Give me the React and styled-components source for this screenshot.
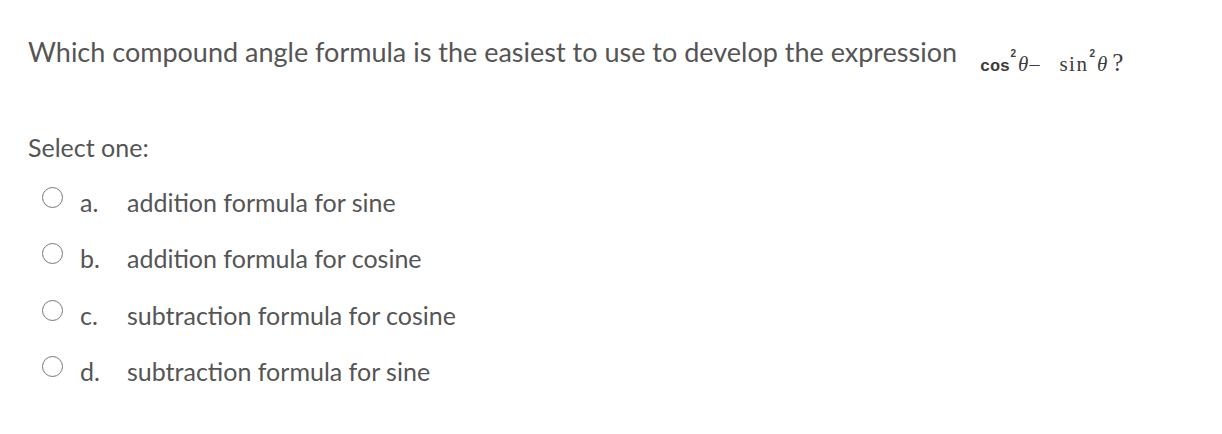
import styled, { createGlobalStyle } from 'styled-components';

const GlobalStyle = createGlobalStyle`
    body {
        margin: 0;
        background: #ffffff;
        font-family: Lato, "Open Sans", sans-serif;
        color: #555555;
    }
`;

const options = [
    {letter: 'a.', text: 'addition formula for sine'},
    {letter: 'b.', text: 'addition formula for cosine'},
    {letter: 'c.', text: 'subtraction formula for cosine'},
    {letter: 'd.', text: 'subtraction formula for sine'},
];

const App = () => {
    return (
        <>
            <GlobalStyle />
            <QuestionWrapper>
                <QuestionText>
                    Which compound angle formula is the easiest to use to develop the expression
                    <MathExpr>
                        <MathMono>cos</MathMono>
                        <Sup>2</Sup>
                        <Theta>θ</Theta>
                        <Minus>–</Minus>
                        <MathSerif>sin</MathSerif>
                        <Sup>2</Sup>
                        <Theta>θ</Theta>
                        <Mark>?</Mark>
                    </MathExpr>
                </QuestionText>
                <Prompt>Select one:</Prompt>
                <OptionList>
                    {options.map((item) => (
                        <OptionRow key={item.letter}>
                            <Radio />
                            <Letter>{item.letter}</Letter>
                            <OptionLabel>{item.text}</OptionLabel>
                        </OptionRow>
                    ))}
                </OptionList>
            </QuestionWrapper>
        </>
    );
};

export default App;

const QuestionWrapper = styled.div`
    padding: 36px 0 0 28px;
    display: flex;
    flex-direction: column;
`;

const QuestionText = styled.div`
    display: flex;
    align-items: baseline;
    height: 32px;
    font-size: 27px;
    line-height: 32px;
    white-space: nowrap;
`;

/// math image part, sits lower than the text
const MathExpr = styled.span`
    display: inline-block;
    margin-left: 23px;
    position: relative;
    top: 9px;
    font-family: "Liberation Serif", serif;
    font-size: 20px;
    line-height: 20px;
    color: #3c3c3c;
`;

const MathMono = styled.span`
    font-family: "Liberation Mono", monospace;
    font-size: 17px;
    font-weight: 700;
    letter-spacing: -0.4px;
`;

const MathSerif = styled.span`
    font-size: 21px;
    letter-spacing: 1.5px;
`;

const Sup = styled.span`
    display: inline-block;
    font-family: "Liberation Sans", sans-serif;
    font-size: 10px;
    font-weight: 700;
    position: relative;
    top: -14px;
    margin: 0 2px 0 1px;
`;

const Theta = styled.span`
    font-size: 21px;
    font-style: italic;
`;

const Minus = styled.span`
    margin: 0 20px 0 1px;
`;

const Mark = styled.span`
    font-size: 25px;
    margin-left: 5px;
`;

const Prompt = styled.div`
    margin-top: 64px;
    font-size: 25px;
    line-height: 30px;
`;

const OptionList = styled.div`
    margin-top: 25px;
    display: flex;
    flex-direction: column;
    row-gap: 26.3px;
`;

const OptionRow = styled.div`
    display: flex;
    align-items: flex-start;
    height: 30px;
    padding-left: 14px;
    font-size: 25px;
    line-height: 30px;
`;

const Radio = styled.span`
    box-sizing: border-box;
    width: 21px;
    height: 21px;
    border: 1.5px solid #777777;
    border-radius: 50%;
    flex-shrink: 0;
`;

const Letter = styled.span`
    margin-left: 17px;
    width: 47px;
`;

const OptionLabel = styled.span``;
